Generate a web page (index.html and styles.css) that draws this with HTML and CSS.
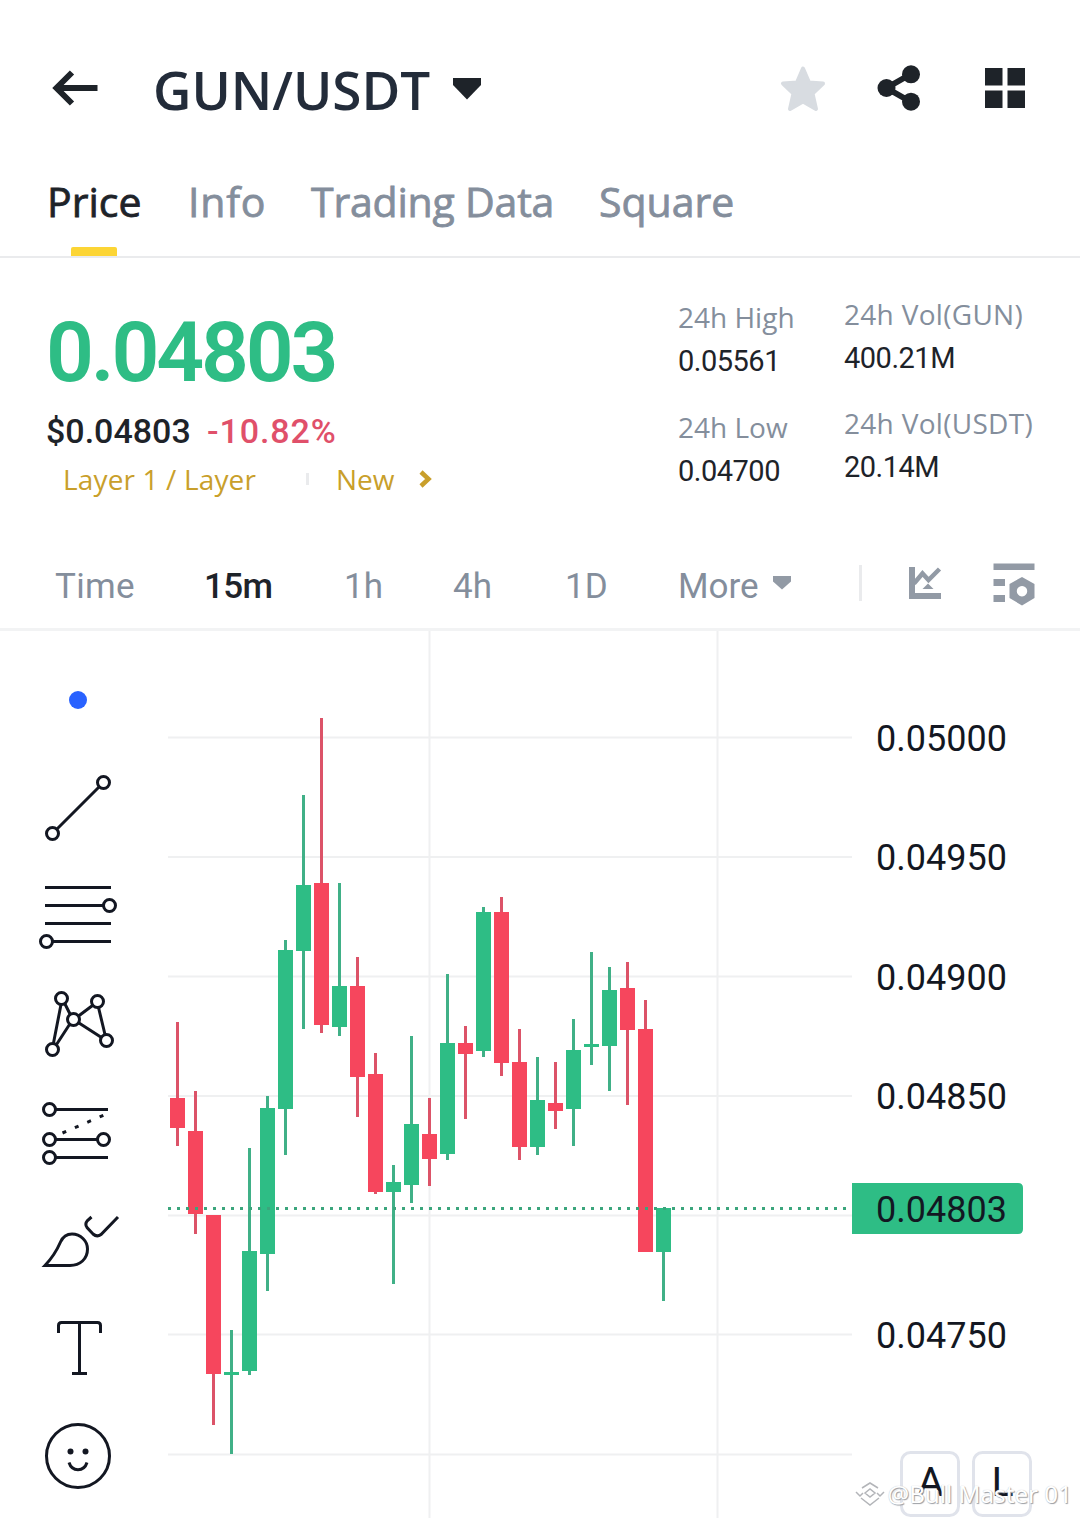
FILE: index.html
```html
<!DOCTYPE html>
<html lang="en">
<head>
<meta charset="utf-8">
<title>GUN/USDT</title>
<link rel="stylesheet" href="styles.css">
</head>
<body>
<header class="topbar">
  <svg class="back" viewBox="52 70 47 36"><path d="M97.500 88H56.500M72 72.500L56.500 88L72 103.500"/></svg>
  <h1 class="pair">GUN/USDT</h1>
  <svg class="pair-caret" viewBox="453 78 28 22"><path d="M453 78H481V85L467 99.500L453 85Z"/></svg>
  <div class="actions">
    <svg class="star" viewBox="780 65 46 48"><path d="M803 68.500L809 82.500L823 83.500L812.500 93.500L816 109L803 101.500L790 109L793.500 93.500L783 83.500L797 82.500Z"/></svg>
    <svg class="share" viewBox="877 64 44 48"><path d="M911 74L886.500 88L911 102"/><circle cx="886.500" cy="88" r="9"/><circle cx="911" cy="74.300" r="9"/><circle cx="911" cy="101.700" r="9"/></svg>
    <svg class="grid" viewBox="985 68 40 40"><path d="M985 68h17.500v17.500h-17.500zM1007.500 68h17.500v17.500h-17.500zM985 90.500h17.500v17.500h-17.500zM1007.500 90.500h17.500v17.500h-17.500z"/></svg>
  </div>
</header>

<nav class="tabs">
  <a class="tab tab-price active">Price</a>
  <a class="tab tab-info">Info</a>
  <a class="tab tab-data">Trading Data</a>
  <a class="tab tab-square">Square</a>
</nav>

<section class="summary">
  <div class="quote">
    <div class="last">0.04803</div>
    <div class="sub"><span class="usd">$0.04803</span><span class="change">-10.82%</span></div>
    <div class="tags"><span class="tag-layer">Layer 1 / Layer</span><i class="tag-sep"></i><span class="tag-new">New</span>
      <svg class="chevron" viewBox="420 469 13 18"><path d="M422 471L429.500 478L422 485"/></svg></div>
  </div>
  <dl class="stats stats-range">
    <dt>24h High</dt><dd>0.05561</dd>
    <dt>24h Low</dt><dd>0.04700</dd>
  </dl>
  <dl class="stats stats-volume">
    <dt>24h Vol(GUN)</dt><dd>400.21M</dd>
    <dt>24h Vol(USDT)</dt><dd>20.14M</dd>
  </dl>
</section>

<div class="intervals">
  <span class="iv iv-time">Time</span>
  <span class="iv iv-15m active">15m</span>
  <span class="iv iv-1h">1h</span>
  <span class="iv iv-4h">4h</span>
  <span class="iv iv-1d">1D</span>
  <span class="iv iv-more">More</span>
  <svg class="more-caret" viewBox="773 576 18 14"><path d="M773 576H791V581.500L782 589.500L773 581.500Z"/></svg>
  <i class="iv-sep"></i>
  <svg class="indicator" viewBox="908 566 34 34"><path class="line" d="M912 567V596H941"/><path class="trend" d="M914 583.500L922.500 573.500L928.500 580L939.500 569"/><path class="mark" d="M922.500 589L928 583.500L933.500 589Z"/></svg>
  <svg class="settings" viewBox="993 563 42 43"><path fill-rule="evenodd" d="M993.500 563.500h41v6.500h-41zM993.500 579h11.500v7h-11.500zM993.500 595h11.500v7h-11.500zM1022 577L1034.500 584V598L1022 605.500L1009.500 598V584ZM1022 586a5.200 5.200 0 1 0 .01 0z"/></svg>
</div>

<main class="chart">
  <div class="tools">
    <svg class="tool" viewBox="0 646 168 108"><circle class="dot" cx="78" cy="700" r="9"/></svg>
    <svg class="tool" viewBox="0 754 168 108"><path d="M57 829L99 787"/><circle cx="52.500" cy="833.500" r="6"/><circle cx="103.500" cy="782.500" r="6"/></svg>
    <svg class="tool" viewBox="0 862 168 108"><path d="M45 887.500H111M45 905.500H103M45 923.500H111M53 941.500H111"/><circle cx="109.500" cy="905.500" r="6"/><circle cx="46.500" cy="941.500" r="6"/></svg>
    <svg class="tool" viewBox="0 970 168 108"><path d="M61 1004.500L53.500 1043M65 1004L70 1014M78.500 1016L92.500 1005.500M69.500 1024.500L56.500 1044.500M79 1023L101.500 1037.500M98.500 1007.500L105 1034.500"/><circle cx="61.500" cy="998.500" r="6"/><circle cx="97.500" cy="1001.500" r="6"/><circle cx="73.500" cy="1019.500" r="6"/><circle cx="52.500" cy="1049.500" r="6"/><circle cx="106.500" cy="1040.500" r="6"/></svg>
    <svg class="tool" viewBox="0 1078 168 108"><path d="M55.500 1109.500H108M55.500 1139.500H97.500M55.500 1157.500H108"/><path class="dashed" d="M62.500 1133L104 1115"/><circle cx="49.500" cy="1109.500" r="6"/><circle cx="49.500" cy="1139.500" r="6"/><circle cx="103.500" cy="1139.500" r="6"/><circle cx="49.500" cy="1157.500" r="6"/></svg>
    <svg class="tool" viewBox="0 1186 168 108"><path d="M45 1265.500C53 1257 57.500 1249 60.500 1242C63 1236.500 67.500 1234 72 1234C80.500 1234 87.500 1241 87.500 1249C87.500 1259 80 1265.500 70 1265.500ZM91.500 1217L87.500 1220.500Q84.500 1224 87 1227.500L93 1234Q97 1237.500 101 1234.500L118 1217"/></svg>
    <svg class="tool" viewBox="0 1294 168 108"><path d="M58.500 1333V1325.500Q58.500 1322.500 61.500 1322.500H97.500Q100.500 1322.500 100.500 1325.500V1333M79.500 1322.500V1373.500M72 1373.500H87"/></svg>
    <svg class="tool" viewBox="0 1402 168 108"><circle cx="78" cy="1456" r="31.500"/><path d="M69 1462.500C72 1472 84 1472 87 1462.500"/><circle class="eye" cx="70.500" cy="1451.500" r="3"/><circle class="eye" cx="85.500" cy="1451.500" r="3"/></svg>
  </div>
  <svg class="plot" viewBox="168 631 912 887">
    <path class="gridlines" d="M168 737.500H852M168 857H852M168 976.500H852M168 1096H852M168 1215.500H852M168 1334.500H852M168 1454.500H852M429.500 631V1518M717.500 631V1518"/>
    <path class="wick down" d="M177.500 1022V1146M195.500 1091V1234M213.500 1215V1425M321.500 718V1033M357.500 957V1117M375.500 1053V1194M429.500 1098V1186M465.500 1026V1119M501.500 897V1076M519.500 1029V1160M555.500 1062V1129M627.500 962V1105M645.500 1000V1252"/>
    <path class="wick up" d="M231.500 1330V1454M249.500 1148V1375M267.500 1096V1291M285.500 940V1155M303.500 795V1029M339.500 883V1036M393.500 1165V1284M411.500 1036V1203M447.500 974V1160M483.500 907V1057M537.500 1057V1155M573.500 1019V1146M591.500 952V1065M609.500 967V1091M663.500 1208V1301"/>
    <path class="body down" d="M177.500 1098V1128M195.500 1131V1214M213.500 1215V1374M321.500 883V1025M357.500 986V1077M375.500 1074V1192M429.500 1134V1159M465.500 1043V1054M501.500 912V1063M519.500 1062V1147M555.500 1103V1111M627.500 988V1030M645.500 1029V1252"/>
    <path class="body up" d="M231.500 1372V1375M249.500 1251V1371M267.500 1108V1254M285.500 950V1109M303.500 885V951M339.500 986V1027M393.500 1182V1192M411.500 1124V1185M447.500 1043V1154M483.500 912V1051M537.500 1100V1147M573.500 1050V1109M591.500 1044V1047M609.500 990V1046M663.500 1208V1252"/>
    <path class="last-line" d="M168 1208.500H849"/>
    <path class="last-tag" d="M852 1183H1018Q1023 1183 1023 1188V1229Q1023 1234 1018 1234H852Z"/>
    <g class="axis">
      <text x="876" y="751">0.05000</text>
      <text x="876" y="870">0.04950</text>
      <text x="876" y="990">0.04900</text>
      <text x="876" y="1109">0.04850</text>
      <text x="876" y="1222">0.04803</text>
      <text x="876" y="1348">0.04750</text>
    </g>
    <g class="scale-buttons">
      <rect x="901.500" y="1452.500" width="57" height="63" rx="9"/>
      <rect x="973.500" y="1452.500" width="57" height="63" rx="9"/>
      <text x="930.500" y="1496">A</text>
      <text x="1002.500" y="1496">L</text>
    </g>
  </svg>
  <div class="watermark">
    <svg viewBox="856 1484 30 26"><path d="M863 1491L871 1486L879 1491M866 1496L871 1492L876 1496L871 1500ZM857 1495L861 1499L864 1496M885 1495L881 1499L878 1496M862 1501L871 1508L880 1501"/></svg>
    <span>@Bull Master 01</span>
  </div>
</main>
</body>
</html>
```
FILE: styles.css
```css
* { box-sizing: border-box; }

body {
  margin: 0;
  width: 1080px;
  height: 1518px;
  overflow: hidden;
  background: #fff;
  color: #1e2329;
  font-family: "Open Sans", "Noto Sans", sans-serif;
}

svg { display: block; flex: none; }

.topbar {
  display: flex;
  align-items: center;
  height: 180px;
  padding: 0 55px 4px 52px;
}
.back { width: 47px; height: 36px; fill: none; stroke: #1e2329; stroke-width: 6; }
.pair {
  width: 300px;
  margin: 0 0 0 54px;
  padding-top: 3px;
  font-size: 53px;
  font-weight: 600;
  line-height: 60px;
  color: #232c3a;
  white-space: nowrap;
}
.pair-caret { width: 28px; height: 22px; margin-top: 2px; fill: #1e2329; }
.actions { display: flex; align-items: center; margin-left: auto; }
.star { width: 46px; height: 48px; margin: 1px 51px 0 0; fill: #d8dce1; stroke: #d8dce1; stroke-width: 4; stroke-linejoin: round; }
.share { width: 44px; height: 48px; margin-right: 64px; fill: #1e2329; }
.share path { fill: none; stroke: #1e2329; stroke-width: 6; }
.grid { width: 40px; height: 40px; fill: #1e2329; }

.tabs {
  display: flex;
  height: 78px;
  padding-left: 47px;
  border-bottom: 2px solid #eaebed;
}
.tab {
  font-size: 41px;
  line-height: 43px;
  color: #848e9c;
  -webkit-text-stroke: 0.8px currentColor;
  white-space: nowrap;
}
.tab.active { color: #1e2329; }
.tab-price { display: flex; flex-direction: column; justify-content: space-between; width: 141px; }
.tab-price::after {
  content: "";
  width: 46px;
  height: 9px;
  margin-left: 23.5px;
  border-radius: 2px 2px 0 0;
  background: #fcd535;
}
.tab-info { width: 123px; letter-spacing: 0.8px; }
.tab-data { width: 288px; letter-spacing: -0.2px; }

.summary { display: flex; height: 285px; }
.quote { width: 678px; padding: 50px 0 0 46px; }
.last {
  font: 600 84px/90px Roboto, sans-serif;
  letter-spacing: -3.2px;
  color: #2ebd85;
}
.sub { display: flex; height: 67px; font: 500 34px/67px Roboto, sans-serif; }
.usd { width: 161px; }
.change { letter-spacing: 0.9px; color: #e0506a; }
.tags {
  display: flex;
  align-items: center;
  height: 28px;
  padding-left: 17px;
  font-size: 28px;
  line-height: 28px;
  color: #c99f2b;
  white-space: nowrap;
}
.tag-layer { width: 243px; letter-spacing: 0.15px; }
.tag-sep { width: 3px; height: 12px; background: #eaebed; }
.tag-new { width: 83px; margin-left: 27px; }
.chevron { width: 13px; height: 18px; fill: none; stroke: #c99f2b; stroke-width: 4.500; }

.stats { margin: 0; white-space: nowrap; }
.stats dt { height: 44px; font-size: 28px; line-height: 44px; color: #848e9c; }
.stats dd { height: 44px; margin: 0 0 22px; font: 400 29px/44px Roboto, sans-serif; letter-spacing: -0.5px; }
.stats-range { width: 166px; padding-top: 37px; }
.stats-volume { padding-top: 35px; }
.stats-volume dt { height: 43px; line-height: 43px; letter-spacing: 0.3px; }

.intervals {
  display: flex;
  align-items: center;
  height: 88px;
  padding: 0 0 0 55px;
  border-bottom: 3px solid #f2f3f4;
  font: 400 35px/84px Roboto, sans-serif;
  color: #848e9c;
  white-space: nowrap;
}
.iv { padding-top: 2px; }
.iv.active { font-weight: 500; color: #1e2329; }
.iv-time { width: 149px; letter-spacing: 0.3px; }
.iv-15m { width: 140px; letter-spacing: -0.6px; }
.iv-1h { width: 109px; }
.iv-4h { width: 112px; }
.iv-1d { width: 113px; }
.iv-more { width: 95px; }
.more-caret { width: 18px; height: 14px; margin-bottom: 5px; fill: #929aa5; }
.iv-sep { width: 3px; height: 36px; margin: 0 46px 5px 68px; background: #eaebed; }
.indicator { width: 34px; height: 34px; margin-bottom: 6px; fill: none; stroke: #929aa5; }
.indicator .line { stroke-width: 6; }
.indicator .trend { stroke-width: 4.500; }
.indicator .mark { fill: #929aa5; stroke: none; }
.settings { width: 42px; height: 43px; margin: 0 0 2px 51px; fill: #929aa5; }

.chart { position: relative; display: flex; height: 887px; }
.tools { width: 168px; padding-top: 15px; }
.tool { width: 168px; height: 108px; fill: none; stroke: #131722; stroke-width: 3; }
.tool .dot { fill: #2962ff; stroke: none; }
.tool .eye { fill: #131722; stroke: none; }
.tool .dashed { stroke-dasharray: 4 9.500; }

.plot { width: 912px; height: 887px; }
.gridlines { stroke: #eff0f1; stroke-width: 2; }
.wick { stroke-width: 3; }
.body { stroke-width: 15; }
.down { stroke: #f6465d; }
.up { stroke: #2ebd85; }
.wick.down { stroke: #dc5368; }
.wick.up { stroke: #40b087; }
.last-line { stroke: #3ba57c; stroke-width: 3; stroke-dasharray: 3 6; }
.last-tag { fill: #2ebd85; }
.axis { fill: #131722; font: 400 36px Roboto, sans-serif; }
.scale-buttons { font: 400 41px Roboto, sans-serif; fill: #131722; text-anchor: middle; }
.scale-buttons rect { fill: #fff; stroke: #e0e3eb; stroke-width: 3; }

/* Overlaid on the scale buttons in the chart corner */
.watermark {
  position: absolute;
  right: 8px;
  bottom: 7px;
  display: flex;
  align-items: center;
  gap: 2px;
  font: 400 24.2px/34px "Noto Sans", sans-serif;
  color: #fff;
  text-shadow: 1px 1px 1px #9a9da3, 0 0 1px #b9bbc0;
  white-space: nowrap;
}
.watermark svg { width: 30px; height: 26px; fill: none; stroke: #b3b5b9; stroke-width: 1.500; }
```
